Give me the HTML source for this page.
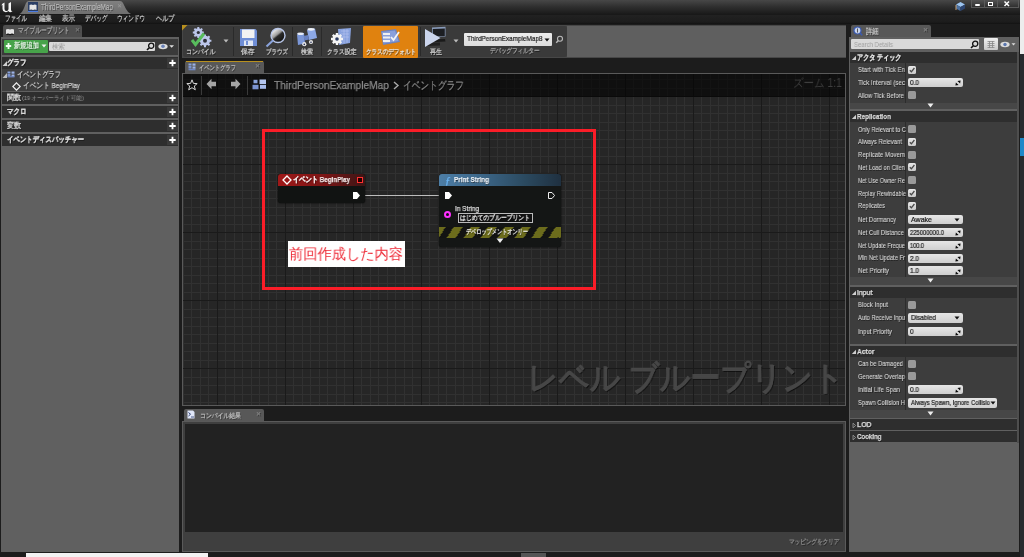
<!DOCTYPE html>
<html><head><meta charset="utf-8">
<style>
*{margin:0;padding:0;box-sizing:border-box}
html,body{width:1024px;height:557px;overflow:hidden;background:#1c1c1c;font-family:"Liberation Sans",sans-serif;color:#ccc}
.a{position:absolute}
.t,.lb,.nt{will-change:transform;-webkit-text-stroke:0.25px currentColor;text-shadow:0.6px 0.6px 0.3px rgba(0,0,0,.55)}
.t{position:absolute;white-space:nowrap;line-height:1}
.lb{position:absolute;left:858px;white-space:nowrap;line-height:1;font-size:7.5px;color:#d4d4d4;-webkit-text-stroke:0.12px #d4d4d4!important}
.cb{position:absolute;left:908px;width:8px;height:8px;border-radius:1.5px;background:#9a9a9a}
.ck{position:absolute;left:908px;width:8px;height:8px;border-radius:1.5px;background:linear-gradient(#e8e8e8,#c8c8c8)}
.nb{position:absolute;left:908px;width:55px;height:9px;border-radius:2px;background:linear-gradient(#e6e6e6,#cfcfcf)}
.nt{position:absolute;white-space:nowrap;line-height:1;font-size:7px;color:#1a1a1a;text-shadow:none!important;-webkit-text-stroke:0.2px #1a1a1a!important}
.sh{position:absolute;left:850px;width:167px;height:11px;background:#2e2e2e}
.sr{position:absolute;left:850px;width:167px;background:#3d3d3d}
.dv{position:absolute;left:905px;width:1px;background:#2c2c2c}
.ex{position:absolute;left:850px;width:167px;background:#474747}
</style></head><body>
<div class="a" style="left:0;top:0;width:1024px;height:557px;overflow:hidden">

<!-- ================= TITLE BAR ================= -->
<div class="a" style="left:0;top:0;width:1020px;height:14px;background:linear-gradient(#474747,#2e2e2e 50%,#1a1a1a)"></div>
<svg class="a" style="left:0;top:0" width="16" height="14"><path d="M1 6 Q2 3 4.5 2.5 L4.5 9 Q4.5 11 6.5 11 Q8.5 11 8.5 9 L8.5 3.5 Q9.5 2.5 11 2 L11 9.5 Q11 11.5 12.5 11 Q11.5 12.5 9.5 12 Q8.5 11.5 8.5 11 Q7 12.5 5 12 Q2.5 11.5 2.5 9 L2.5 5 Q1.5 5 1 6 Z" fill="#f4f4f4"/></svg>
<svg class="a" style="left:0;top:0" width="140" height="15"><defs><linearGradient id="tg" x1="0" y1="0" x2="0" y2="1"><stop offset="0" stop-color="#808080"/><stop offset="1" stop-color="#6e6e6e"/></linearGradient></defs><path d="M19.5 14 Q22 13 24 8 L26 3 Q27 1 29 1 L120 1 Q122 1 123 3 L126 9 Q128 13 131 14 Z" fill="url(#tg)"/></svg>
<div class="a" style="left:28px;top:2px;width:10px;height:10px;background:#2b3f66"></div>
<div class="a" style="left:28px;top:11px;width:10px;height:1px;background:#4a7ae0"></div>
<svg class="a" style="left:28px;top:2px" width="10" height="10"><path d="M1.5 3 Q3 2 5 3 Q7 2 8.5 3 L8.5 8 Q7 7 5 8 Q3 7 1.5 8 Z" fill="#e6e6e6"/></svg>
<div class="t" style="left:41px;top:3px;font-size:9px;color:#b6b6b6;--w:72;transform:scaleX(0.7090);transform-origin:0 0">ThirdPersonExampleMap</div>
<div class="t" style="left:117px;top:4px;font-size:5.5px;color:#999;text-shadow:none;-webkit-text-stroke:0">✕</div>
<!-- cap cube icon -->
<svg class="a" style="left:955px;top:1px" width="11" height="11"><path d="M5.5 1 L10 3.5 L5.5 6 L1 3.5 Z" fill="#9cc4f0"/><path d="M1 3.5 L5.5 6 L5.5 10 L1 7.5 Z" fill="#4a6fa0"/><path d="M10 3.5 L5.5 6 L5.5 10 L10 7.5 Z" fill="#2c4470"/><rect x="0.5" y="4" width="1" height="5" fill="#c8a070"/></svg>
<!-- window buttons -->
<div class="a" style="left:971px;top:0;width:48px;height:8px;background:linear-gradient(#525252,#303030);border:1px solid #5a5a5a;border-top:0"></div>
<div class="a" style="left:983.5px;top:0;width:1px;height:8px;background:#5a5a5a"></div>
<div class="a" style="left:996.5px;top:0;width:1px;height:8px;background:#5a5a5a"></div>
<div class="a" style="left:974.5px;top:4px;width:5px;height:2px;background:#fff;border-radius:1px"></div>
<div class="a" style="left:988px;top:1.5px;width:4.5px;height:4.5px;border:1.3px solid #fff"></div>
<svg class="a" style="left:1003px;top:0" width="8" height="8"><path d="M1.5 1.5 L6 6 M6 1.5 L1.5 6" stroke="#fff" stroke-width="1.5"/></svg>
<!-- right screen edge -->
<div class="a" style="left:1020px;top:0;width:4px;height:54.5px;background:#ededed"></div>
<div class="a" style="left:1020px;top:54px;width:4px;height:503px;background:#272b2e"></div>
<div class="a" style="left:1020px;top:138px;width:4px;height:18px;background:#1e88c8"></div>

<!-- ================= MENU BAR ================= -->
<div class="a" style="left:0;top:14px;width:1020px;height:10px;background:linear-gradient(#151515,#212121 15%,#1c1c1c 80%,#121212)"></div>
<div class="t" style="left:5px;top:15.2px;font-size:7.5px;color:#c6c6c6;--w:22;transform:scaleX(0.6875);transform-origin:0 0">ファイル</div>
<div class="t" style="left:38.5px;top:15.2px;font-size:7.5px;color:#c6c6c6;--w:13;transform:scaleX(0.8125);transform-origin:0 0">編集</div>
<div class="t" style="left:61.8px;top:15.2px;font-size:7.5px;color:#c6c6c6;--w:13;transform:scaleX(0.8125);transform-origin:0 0">表示</div>
<div class="t" style="left:84.5px;top:15.2px;font-size:7.5px;color:#c6c6c6;--w:22.5;transform:scaleX(0.7031);transform-origin:0 0">デバッグ</div>
<div class="t" style="left:117.2px;top:15.2px;font-size:7.5px;color:#c6c6c6;--w:28;transform:scaleX(0.7000);transform-origin:0 0">ウィンドウ</div>
<div class="t" style="left:155.8px;top:15.2px;font-size:7.5px;color:#c6c6c6;--w:18.5;transform:scaleX(0.7708);transform-origin:0 0">ヘルプ</div>

<!-- ================= LEFT PANEL ================= -->
<div class="a" style="left:0;top:24px;width:182px;height:533px;background:#1c1c1c"></div>
<div class="a" style="left:3px;top:25px;width:79px;height:12px;background:#4f4f4f;border-radius:2px 2px 0 0"></div>
<svg class="a" style="left:5px;top:27px" width="10" height="9"><path d="M1 2.5 Q3 1.5 5 2.5 Q7 1.5 9 2.5 L9 7 Q7 6 5 7 Q3 6 1 7 Z" fill="#e4e4e4"/><path d="M1.5 7.5 Q3 6.8 5 7.8 Q7 6.8 8.5 7.5" stroke="#111" stroke-width="1" fill="none"/></svg>
<div class="t" style="left:17.5px;top:27.3px;font-size:7.5px;color:#a8a8a8;--w:51.5;transform:scaleX(0.7153);transform-origin:0 0">マイブループリント</div>
<div class="t" style="left:74.5px;top:28px;font-size:5.5px;color:#777">✕</div>
<div class="a" style="left:1px;top:37px;width:178px;height:515px;background:#606060"></div>
<div class="a" style="left:2px;top:38.5px;width:176px;height:16px;background:#3a3a3a"></div>
<div class="a" style="left:4px;top:40px;width:43.5px;height:12.5px;background:#47a34a;border-radius:1px"></div>
<svg class="a" style="left:5px;top:42px" width="7" height="8"><path d="M3.5 1 V7 M0.8 4 H6.2" stroke="#f4fff4" stroke-width="1.8"/></svg>
<div class="t" style="left:13.5px;top:42.2px;font-size:7.5px;color:#e6f2e6;--w:25;transform:scaleX(0.7812);transform-origin:0 0">新規追加</div>
<svg class="a" style="left:40.5px;top:44px" width="6" height="4"><path d="M0.5 0.5 H5.5 L3 3.5 Z" fill="#f0f0f0"/></svg>
<div class="a" style="left:49px;top:41.5px;width:106px;height:9.5px;background:#d9d9d9;border-radius:1px"></div>
<div class="t" style="left:52px;top:42.5px;text-shadow:none;-webkit-text-stroke:0;font-size:7px;color:#9a9a9a;--w:12.5;transform:scaleX(0.8929);transform-origin:0 0">検索</div>
<svg class="a" style="left:146px;top:42px" width="9" height="9"><circle cx="5.2" cy="3.8" r="2.6" fill="none" stroke="#111" stroke-width="1.3"/><path d="M3.3 5.7 L1 8" stroke="#111" stroke-width="1.6"/></svg>
<svg class="a" style="left:157px;top:42px" width="20" height="9"><ellipse cx="6" cy="4.5" rx="4.6" ry="2.7" fill="#dcdcdc"/><circle cx="6" cy="4.3" r="1.8" fill="#6a82b8"/><path d="M12.3 3.3 H17 L14.65 5.8 Z" fill="#e0e0e0"/></svg>

<!-- graph section -->
<div class="a" style="left:2px;top:56.5px;width:176px;height:34px;background:#3e3e3e"></div>
<div class="a" style="left:2px;top:57px;width:176px;height:12px;background:#2e2e2e"></div>
<svg class="a" style="left:2px;top:60px" width="6" height="7"><path d="M5 1 V6 H0.5 Z" fill="#cfcfcf"/></svg>
<div class="t" style="left:7.3px;top:59.3px;font-size:7.5px;font-weight:bold;color:#dcdcdc;--w:19.5;transform:scaleX(0.8125);transform-origin:0 0">グラフ</div>
<div class="a" style="left:166.5px;top:58px;width:11px;height:10px;background:#3a3a3a"></div>
<svg class="a" style="left:166.5px;top:58px" width="11" height="10"><path d="M5.5 1.8 V8.2 M2.3 5 H8.7" stroke="#fff" stroke-width="1.8"/></svg>
<svg class="a" style="left:2px;top:71.5px" width="6" height="7"><path d="M5 1 V6 H0.5 Z" fill="#bdbdbd"/></svg>
<svg class="a" style="left:7px;top:71px" width="9" height="7"><rect x="0.5" y="3" width="3" height="2.5" fill="#7b93d0"/><rect x="4.5" y="0.5" width="3" height="2.2" fill="#9cb2e6"/><rect x="4.5" y="3.5" width="3" height="2.2" fill="#9cb2e6"/><rect x="0.5" y="0.5" width="3" height="2" fill="#8aa3dc"/><rect x="0.5" y="5.2" width="7" height="1.2" fill="#6d86c4"/></svg>
<div class="t" style="left:17.3px;top:71.3px;font-size:7.5px;color:#cfcfcf;--w:44;transform:scaleX(0.7857);transform-origin:0 0">イベントグラフ</div>
<svg class="a" style="left:12px;top:81.5px" width="9" height="9"><path d="M4.5 0.8 L8.2 4.5 L4.5 8.2 L0.8 4.5 Z" fill="none" stroke="#eee" stroke-width="1.2"/></svg>
<div class="t" style="left:22.5px;top:81.8px;font-size:7.5px;color:#cfcfcf;--w:57;transform:scaleX(0.8400);transform-origin:0 0">イベント BeginPlay</div>

<div class="a" style="left:2px;top:92.3px;width:176px;height:12.2px;background:#2e2e2e"></div>
<div class="t" style="left:7px;top:94.2px;font-size:7.5px;-webkit-text-stroke:0.3px currentColor;color:#d8d8d8;--w:14;transform:scaleX(0.8750);transform-origin:0 0">関数</div>
<div class="t" style="left:21.5px;top:95.3px;text-shadow:none;-webkit-text-stroke:0;font-size:6px;color:#9a9a9a;--w:62;transform:scaleX(0.9345);transform-origin:0 0">(19 オーバーライド可能)</div>
<div class="a" style="left:166.5px;top:93px;width:11px;height:10px;background:#3a3a3a"></div>
<svg class="a" style="left:166.5px;top:93px" width="11" height="10"><path d="M5.5 1.8 V8.2 M2.3 5 H8.7" stroke="#fff" stroke-width="1.8"/></svg>

<div class="a" style="left:2px;top:106px;width:176px;height:11.5px;background:#2e2e2e"></div>
<div class="t" style="left:7px;top:108.2px;font-size:7.5px;font-weight:bold;color:#d8d8d8;--w:19.5;transform:scaleX(0.8125);transform-origin:0 0">マクロ</div>
<div class="a" style="left:166.5px;top:107px;width:11px;height:10px;background:#3a3a3a"></div>
<svg class="a" style="left:166.5px;top:107px" width="11" height="10"><path d="M5.5 1.8 V8.2 M2.3 5 H8.7" stroke="#fff" stroke-width="1.8"/></svg>

<div class="a" style="left:2px;top:120px;width:176px;height:11.5px;background:#2e2e2e"></div>
<div class="t" style="left:7px;top:121.8px;font-size:7.5px;-webkit-text-stroke:0.3px currentColor;color:#d8d8d8;--w:14;transform:scaleX(0.8750);transform-origin:0 0">変数</div>
<div class="a" style="left:166.5px;top:121px;width:11px;height:10px;background:#3a3a3a"></div>
<svg class="a" style="left:166.5px;top:121px" width="11" height="10"><path d="M5.5 1.8 V8.2 M2.3 5 H8.7" stroke="#fff" stroke-width="1.8"/></svg>

<div class="a" style="left:2px;top:133.5px;width:176px;height:12px;background:#2e2e2e"></div>
<div class="t" style="left:7px;top:135.8px;font-size:7.5px;font-weight:bold;color:#d8d8d8;--w:77;transform:scaleX(0.8021);transform-origin:0 0">イベントディスパッチャー</div>
<div class="a" style="left:166.5px;top:135px;width:11px;height:10px;background:#3a3a3a"></div>
<svg class="a" style="left:166.5px;top:135px" width="11" height="10"><path d="M5.5 1.8 V8.2 M2.3 5 H8.7" stroke="#fff" stroke-width="1.8"/></svg>

<!-- ================= TOOLBAR ================= -->
<div class="a" style="left:182px;top:25px;width:664px;height:33px;background:#474747"></div>
<div class="a" style="left:182.5px;top:26px;width:384px;height:30.5px;background:#3a3a3a;border-radius:2px"></div>
<svg class="a" style="left:182px;top:25px" width="6" height="6"><path d="M0 0 H5.5 L0 5.5 Z" fill="#b8901e"/></svg>
<div class="a" style="left:567px;top:26px;width:279px;height:31px;background:#5f5f5f"></div>
<div class="a" style="left:233px;top:27px;width:1px;height:29px;background:#2a2a2a"></div>
<div class="a" style="left:292px;top:27px;width:1px;height:29px;background:#2a2a2a"></div>
<div class="a" style="left:321px;top:27px;width:1px;height:29px;background:#2a2a2a"></div>
<div class="a" style="left:420px;top:27px;width:1px;height:29px;background:#2a2a2a"></div>
<div class="a" style="left:363px;top:26px;width:55px;height:31.5px;background:#e0820f;border-radius:1px"></div>

<!-- compile icon -->
<svg class="a" style="left:189px;top:26px" width="26" height="23">
 <g fill="#bcc6ea"><circle cx="9.3" cy="6.5" r="4.2"/><circle cx="16" cy="14.8" r="5"/></g>
 <g stroke="#bcc6ea" stroke-width="2"><path d="M9.3 1 V12 M3.8 6.5 H14.8 M5.4 2.6 L13.2 10.4 M13.2 2.6 L5.4 10.4"/><path d="M16 8.4 V21.2 M9.6 14.8 H22.4 M11.5 10.3 L20.5 19.3 M20.5 10.3 L11.5 19.3"/></g>
 <circle cx="9.3" cy="6.5" r="1.6" fill="#2e3038"/><circle cx="16" cy="14.8" r="2" fill="#2e3038"/>
 <path d="M3 14 L6.5 18.5 L15 7.5" fill="none" stroke="#58bc5c" stroke-width="3"/>
</svg>
<svg class="a" style="left:223px;top:39px" width="6" height="4"><path d="M0.5 0.5 H5.5 L3 3.5 Z" fill="#bbb"/></svg>
<div class="t" style="left:186px;top:47.8px;font-size:7px;color:#d0d0d0;text-shadow:0.6px 0.6px 0 #151515;--w:29.5;transform:scaleX(0.8429);transform-origin:0 0">コンパイル</div>
<!-- save icon -->
<svg class="a" style="left:239px;top:28px" width="19" height="19"><path d="M1 1 H16.5 L18 2.5 V18 H1 Z" fill="#6f8ed6"/><rect x="3" y="1.5" width="12.5" height="8.5" fill="#f2f2f2"/><rect x="5" y="12.5" width="9" height="5.5" fill="#dfe6f4"/><rect x="7" y="13" width="2" height="4" fill="#6f8ed6"/></svg>
<div class="t" style="left:241px;top:47.8px;font-size:7px;color:#d0d0d0;text-shadow:0.6px 0.6px 0 #151515;--w:13.5;transform:scaleX(0.9643);transform-origin:0 0">保存</div>
<!-- browse icon -->
<svg class="a" style="left:264px;top:27px" width="24" height="21"><defs><linearGradient id="lg" x1="0.2" y1="0.1" x2="0.75" y2="0.8"><stop offset="0" stop-color="#f4f4f4"/><stop offset="0.45" stop-color="#9a9a9a"/><stop offset="0.6" stop-color="#2a2a2a"/><stop offset="1" stop-color="#181818"/></linearGradient></defs><circle cx="14" cy="8.5" r="7" fill="url(#lg)" stroke="#b8c6e8" stroke-width="1.4"/><path d="M9.2 13.3 L2.5 19.5" stroke="#8aa3dc" stroke-width="2"/></svg>
<div class="t" style="left:265.5px;top:47.8px;font-size:7px;color:#d0d0d0;text-shadow:0.6px 0.6px 0 #151515;--w:22;transform:scaleX(0.7857);transform-origin:0 0">ブラウズ</div>
<!-- find icon (binoculars) -->
<svg class="a" style="left:294px;top:26px" width="26" height="22"><path d="M3 8.5 L10 7 L11 17.5 L4 19 Z" fill="#7b97d8"/><path d="M13 4 L21 2.5 L23 12 L15 14 Z" fill="#8ca8e6"/><ellipse cx="6.5" cy="7.8" rx="3.3" ry="1.3" fill="#e6ecf8"/><ellipse cx="17" cy="3.3" rx="3.6" ry="1.4" fill="#eef2fa"/><path d="M9.5 10 L14 9 L15 13.5 L10.5 14.5 Z" fill="#6882c4"/><circle cx="10.3" cy="18.2" r="2.1" fill="#e8e8e8"/><circle cx="17" cy="16" r="2.1" fill="#e8e8e8"/><circle cx="10.3" cy="18.4" r="0.8" fill="#2a3458"/><circle cx="17" cy="16.2" r="0.8" fill="#2a3458"/></svg>
<div class="t" style="left:301px;top:47.8px;font-size:7px;color:#d0d0d0;text-shadow:0.6px 0.6px 0 #151515;--w:12;transform:scaleX(0.8571);transform-origin:0 0">検索</div>
<!-- class settings -->
<svg class="a" style="left:329px;top:27px" width="25" height="21"><path d="M9 2 L22 1 L21 16 L10 18 Z" fill="#88a2de"/><path d="M12 4 H20 M12 7 H20 M12 10 H20 M15 2 V16 M18 2 V16" stroke="#b8c8f0" stroke-width="0.6"/><circle cx="8" cy="12" r="4.5" fill="#f4f4f4"/><path d="M8 6 V18 M2 12 H14 M3.8 7.8 L12.2 16.2 M12.2 7.8 L3.8 16.2" stroke="#f4f4f4" stroke-width="2.4"/><circle cx="8" cy="12" r="1.8" fill="#2a3a60"/></svg>
<div class="t" style="left:326.8px;top:47.8px;font-size:7px;color:#d0d0d0;text-shadow:0.6px 0.6px 0 #151515;--w:29.5;transform:scaleX(0.8429);transform-origin:0 0">クラス設定</div>
<!-- class defaults -->
<svg class="a" style="left:380px;top:28px" width="22" height="19"><path d="M1 3 L16 1 L20 14 L3 17 Z" fill="#6d84c0"/><path d="M1.5 4 L15 2.5 L18.5 13 L3.5 15.5 Z" fill="#8aa0dc"/><rect x="3" y="5" width="7" height="2" fill="#f0f0f0"/><rect x="3" y="8.5" width="7" height="2" fill="#f0f0f0"/><rect x="3" y="12" width="7" height="2" fill="#f0f0f0"/><path d="M11 9 L13.5 12 L19 4" fill="none" stroke="#f4f4f4" stroke-width="1.8"/></svg>
<div class="t" style="left:365.8px;top:47.8px;font-size:7px;color:#e6e6e6;text-shadow:0.6px 0.6px 0 #3a2a10;--w:50;transform:scaleX(0.7937);transform-origin:0 0">クラスのデフォルト</div>
<!-- play icon -->
<svg class="a" style="left:420px;top:24px" width="30" height="26"><path d="M7 15.5 L25 15 L25.5 17.5 L8 18.5 Z" fill="#151515" opacity="0.85"/><path d="M6 19 L20 18.5 L20 21.5 L6 22 Z" fill="#151515" opacity="0.7"/><path d="M12 3.5 L25.5 2.8 L25.5 12.5 L12 12.8 Z" fill="#8a9cbc"/><path d="M12.8 5 L24.8 4.4 L24.8 12 L12.8 12.2 Z" fill="#1c1e22"/><path d="M5 5 L20.5 14 L5 23 Z" fill="#cbd5ec"/></svg>
<svg class="a" style="left:453px;top:39px" width="6" height="4"><path d="M0.5 0.5 H5.5 L3 3.5 Z" fill="#bbb"/></svg>
<div class="t" style="left:429.8px;top:47.8px;font-size:7px;color:#d0d0d0;text-shadow:0.6px 0.6px 0 #151515;--w:12;transform:scaleX(0.8571);transform-origin:0 0">再生</div>
<!-- debug filter -->
<div class="a" style="left:463.8px;top:32.6px;width:88.5px;height:13px;background:linear-gradient(#ececec,#dcdcdc);border-radius:1px"></div>
<div class="t" style="left:467px;top:35px;text-shadow:none;-webkit-text-stroke:0.2px #1e1e1e;font-size:7.5px;color:#1e1e1e;--w:75.5;transform:scaleX(0.8503);transform-origin:0 0">ThirdPersonExampleMap8</div>
<svg class="a" style="left:543.5px;top:38px" width="6" height="4"><path d="M0.5 0.5 H5.5 L3 3.5 Z" fill="#111"/></svg>
<svg class="a" style="left:555px;top:35px" width="9" height="9"><circle cx="5" cy="3.8" r="2.5" fill="none" stroke="#bbb" stroke-width="1.1"/><path d="M3.2 5.7 L1.2 7.8" stroke="#bbb" stroke-width="1.4"/></svg>
<div class="t" style="left:490px;top:46.5px;font-size:7px;color:#a8a8a8;--w:49.5;transform:scaleX(0.7857);transform-origin:0 0">デバッグフィルター</div>

<!-- ================= GRAPH ================= -->
<div class="a" style="left:185px;top:61px;width:79px;height:12px;background:#585858;border-radius:2px 2px 0 0"></div>
<div class="a" style="left:186px;top:61px;width:77px;height:1px;background:#b8901e"></div>
<svg class="a" style="left:188px;top:63px" width="9" height="8"><rect x="0.5" y="3" width="3" height="2.5" fill="#7b93d0"/><rect x="4.5" y="0.5" width="3" height="2.2" fill="#9cb2e6"/><rect x="4.5" y="3.5" width="3" height="2.2" fill="#9cb2e6"/><rect x="0.5" y="0.5" width="3" height="2" fill="#8aa3dc"/><rect x="0.5" y="5.8" width="7" height="1.5" fill="#6d86c4"/></svg>
<div class="t" style="left:199px;top:63.5px;font-size:7px;color:#bdbdbd;--w:37;transform:scaleX(0.7551);transform-origin:0 0">イベントグラフ</div>
<div class="t" style="left:255px;top:64px;font-size:5.5px;color:#808080">✕</div>

<div class="a" style="left:182px;top:73px;width:664px;height:333px;background:#5a5a5a"></div>
<div class="a" style="left:183px;top:74px;width:662px;height:331px;background:#262626"></div>
<svg class="a" style="left:183px;top:74px" width="662" height="331"><path shape-rendering="crispEdges" d="M0.5 0V331M8.5 0V331M17.5 0V331M25.5 0V331M42.5 0V331M51.5 0V331M59.5 0V331M68.5 0V331M76.5 0V331M85.5 0V331M93.5 0V331M110.5 0V331M119.5 0V331M127.5 0V331M136.5 0V331M144.5 0V331M153.5 0V331M161.5 0V331M178.5 0V331M187.5 0V331M195.5 0V331M204.5 0V331M212.5 0V331M221.5 0V331M229.5 0V331M246.5 0V331M255.5 0V331M263.5 0V331M272.5 0V331M280.5 0V331M289.5 0V331M297.5 0V331M314.5 0V331M323.5 0V331M331.5 0V331M340.5 0V331M348.5 0V331M357.5 0V331M365.5 0V331M382.5 0V331M391.5 0V331M399.5 0V331M408.5 0V331M416.5 0V331M425.5 0V331M433.5 0V331M450.5 0V331M459.5 0V331M467.5 0V331M476.5 0V331M484.5 0V331M493.5 0V331M501.5 0V331M518.5 0V331M527.5 0V331M535.5 0V331M544.5 0V331M552.5 0V331M561.5 0V331M569.5 0V331M586.5 0V331M595.5 0V331M603.5 0V331M612.5 0V331M620.5 0V331M629.5 0V331M637.5 0V331M654.5 0V331M0 5.5H662M0 14.5H662M0 31.5H662M0 39.5H662M0 48.5H662M0 56.5H662M0 65.5H662M0 73.5H662M0 82.5H662M0 99.5H662M0 107.5H662M0 116.5H662M0 124.5H662M0 133.5H662M0 141.5H662M0 150.5H662M0 167.5H662M0 175.5H662M0 184.5H662M0 192.5H662M0 201.5H662M0 209.5H662M0 218.5H662M0 235.5H662M0 243.5H662M0 252.5H662M0 260.5H662M0 269.5H662M0 277.5H662M0 286.5H662M0 303.5H662M0 311.5H662M0 320.5H662M0 328.5H662" stroke="#313131" stroke-width="1" fill="none"/><path shape-rendering="crispEdges" d="M34.5 0V331M102.5 0V331M170.5 0V331M238.5 0V331M306.5 0V331M374.5 0V331M442.5 0V331M510.5 0V331M578.5 0V331M646.5 0V331M0 22.5H662M0 90.5H662M0 158.5H662M0 226.5H662M0 294.5H662" stroke="#1a1a1a" stroke-width="1" fill="none"/></svg>
<div class="a" style="left:183px;top:74px;width:662px;height:23px;background:rgba(0,0,0,0.6)"></div>
<svg class="a" style="left:186px;top:79px" width="12" height="12"><path d="M6 0.8 L7.4 4.4 L11.2 4.6 L8.3 7 L9.3 10.8 L6 8.7 L2.7 10.8 L3.7 7 L0.8 4.6 L4.6 4.4 Z" fill="none" stroke="#d6d6d6" stroke-width="1"/></svg>
<div class="a" style="left:201px;top:76px;width:1px;height:19px;background:#3a3a3a"></div>
<svg class="a" style="left:206px;top:78px" width="11" height="12"><path d="M0.5 6 L5.5 0.8 V3.8 H10 V8.2 H5.5 V11.2 Z" fill="#a4a4a4"/></svg>
<svg class="a" style="left:229.5px;top:78px" width="11" height="12"><path d="M10.5 6 L5.5 0.8 V3.8 H1 V8.2 H5.5 V11.2 Z" fill="#a4a4a4"/></svg>
<div class="a" style="left:247px;top:76px;width:1px;height:19px;background:#3a3a3a"></div>
<svg class="a" style="left:252px;top:79px" width="15" height="11"><rect x="1.5" y="0.8" width="4" height="3.5" fill="#8aa3dc"/><rect x="7.5" y="0.5" width="6.5" height="4.5" fill="#b4c6f0"/><rect x="0.5" y="5.8" width="6" height="4.5" fill="#7b93d0"/><rect x="8" y="5.8" width="6" height="4" fill="#a8bcec"/></svg>
<div class="t" style="left:273.5px;top:79.5px;font-size:11px;color:#8c8c8c;--w:115;transform:scaleX(0.9265);transform-origin:0 0">ThirdPersonExampleMap</div>
<svg class="a" style="left:392px;top:81px" width="8" height="9"><path d="M2 1 L6 4.5 L2 8" fill="none" stroke="#a8a8a8" stroke-width="1.4"/></svg>
<div class="t" style="left:402.5px;top:79.5px;font-size:11px;color:#8c8c8c;--w:61;transform:scaleX(0.7922);transform-origin:0 0">イベントグラフ</div>
<div class="t" style="left:792.5px;top:77px;text-shadow:none;-webkit-text-stroke:0;font-size:12px;color:#3e3e3e;--w:49;transform:scaleX(0.8748);transform-origin:0 0">ズーム 1:1</div>
<div class="t" style="left:528px;top:360.5px;font-size:33px;font-weight:bold;color:#474747;--w:316;transform:scaleX(0.9076);transform-origin:0 0">レベル ブループリント</div>

<!-- red annotation -->
<div class="a" style="left:262px;top:128.5px;width:333.6px;height:161.3px;border:3px solid #fb1d28"></div>
<div class="a" style="left:288px;top:241px;width:117px;height:26px;background:#fff"></div>
<div class="t" style="left:289px;top:246px;text-shadow:none;-webkit-text-stroke:0;font-size:15px;color:#ee2a36;--w:114;transform:scaleX(0.9500);transform-origin:0 0">前回作成した内容</div>
<!-- wire -->
<div class="a" style="left:362px;top:195px;width:78px;height:1px;background:#bdbdbd"></div>
<!-- event node -->
<div class="a" style="left:278px;top:174px;width:87px;height:29px;border-radius:3px;background:#111312;box-shadow:0 0 2px #000"></div>
<div class="a" style="left:278px;top:174px;width:87px;height:12px;border-radius:3px 3px 0 0;background:linear-gradient(90deg,#a01818,#7a1515 55%,#3a1616)"></div>
<svg class="a" style="left:282px;top:175px" width="10" height="10"><path d="M5 1 L9 5 L5 9 L1 5 Z" fill="none" stroke="#fff" stroke-width="1.3"/></svg>
<div class="t" style="left:293px;top:176px;font-size:8px;font-weight:bold;color:#f2e6e6;--w:57;transform:scaleX(0.7818);transform-origin:0 0">イベント BeginPlay</div>
<div class="a" style="left:357px;top:177px;width:6px;height:6px;border:1.3px solid #ff3030;background:#200"></div>
<svg class="a" style="left:352px;top:191px" width="9" height="9"><path d="M1 1 H5 L8 4.5 L5 8 H1 Z" fill="#fff"/></svg>
<!-- print string node -->
<div class="a" style="left:439px;top:174px;width:122px;height:73px;border-radius:3px;background:#141615;box-shadow:0 0 2px #000"></div>
<div class="a" style="left:439px;top:174px;width:122px;height:12px;border-radius:3px 3px 0 0;background:linear-gradient(90deg,#4d7ea6,#3c6688 35%,#2b4a60 70%,#1f3040)"></div>
<div class="t" style="left:444.5px;top:174.5px;font-size:11px;font-style:italic;font-family:'Liberation Serif',serif;color:#6ab4f4;text-shadow:none">ƒ</div>
<div class="t" style="left:454px;top:176px;font-size:8px;font-weight:bold;color:#e8eef4;--w:35;transform:scaleX(0.8034);transform-origin:0 0">Print String</div>
<svg class="a" style="left:444px;top:191px" width="9" height="9"><path d="M1 1 H5 L8 4.5 L5 8 H1 Z" fill="#fff"/></svg>
<svg class="a" style="left:547px;top:191px" width="9" height="9"><path d="M1.5 1.5 H5 L7.5 4.5 L5 7.5 H1.5 Z" fill="none" stroke="#eee" stroke-width="1"/></svg>
<div class="t" style="left:455px;top:205px;font-size:7px;color:#ddd;--w:24;transform:scaleX(0.9203);transform-origin:0 0">In String</div>
<div class="a" style="left:444px;top:211px;width:7px;height:7px;border-radius:50%;border:2px solid #ff30ff;background:#140814"></div>
<div class="a" style="left:458px;top:213px;width:75px;height:10px;border:1px solid #bbb;background:#111"></div>
<div class="t" style="left:460px;top:214px;font-size:7px;color:#eee;--w:70;transform:scaleX(0.8333);transform-origin:0 0">はじめてのブループリント</div>
<div class="a" style="left:439px;top:227px;width:122px;height:11px;background:repeating-linear-gradient(122deg,#6c6c1c 0 7.6px,#121312 7.6px 14.4px);background-position:-2.4px 0"></div>
<div class="t" style="left:466px;top:228px;font-size:7px;color:#eee;--w:62;transform:scaleX(0.7381);transform-origin:0 0">デベロップメントオンリー</div>
<svg class="a" style="left:496px;top:238px" width="8" height="6"><path d="M0.5 0.5 H7.5 L4 5 Z" fill="#eee"/></svg>

<!-- ================= COMPILE RESULTS ================= -->
<div class="a" style="left:184px;top:409px;width:80px;height:12px;background:#585858;border-radius:2px 2px 0 0"></div>
<svg class="a" style="left:187px;top:410px" width="8" height="9"><path d="M0.5 0.5 H6 L7.5 2 V8.5 H0.5 Z" fill="#dfe6f8"/><path d="M1.5 2.5 L3.5 4.2 L1.5 6" fill="none" stroke="#2a3a70" stroke-width="1"/><path d="M4 7 H7" stroke="#2a3a70" stroke-width="0.8"/></svg>
<div class="t" style="left:199.5px;top:411.5px;font-size:7px;color:#bdbdbd;--w:41;transform:scaleX(0.8367);transform-origin:0 0">コンパイル結果</div>
<div class="t" style="left:255.5px;top:412px;font-size:5.5px;color:#808080">✕</div>
<div class="a" style="left:182px;top:421px;width:664px;height:131px;background:#3f3f3f;border:1px solid #5a5a5a"></div>
<div class="a" style="left:185px;top:424px;width:658px;height:108px;background:#222"></div>
<div class="t" style="left:789px;top:537.5px;font-size:7px;color:#8a8a8a;--w:50.5;transform:scaleX(0.8016);transform-origin:0 0">マッピングをクリア</div>

<!-- ================= DETAILS ================= -->
<div class="a" style="left:851px;top:25px;width:80px;height:12px;background:#585858;border-radius:2px 2px 0 0"></div>
<svg class="a" style="left:853px;top:26px" width="10" height="10"><circle cx="4.5" cy="4.5" r="3.5" fill="#c8d4ec" stroke="#3a5ab0" stroke-width="1.2"/><path d="M6.8 6.8 L9.2 9.2" stroke="#3a5ab0" stroke-width="1.6"/><rect x="4" y="2.5" width="1" height="4" fill="#555"/></svg>
<div class="t" style="left:866px;top:27.5px;font-size:7.5px;color:#c0c0c0;--w:12.5;transform:scaleX(0.7812);transform-origin:0 0">詳細</div>
<div class="t" style="left:922.5px;top:28px;font-size:5.5px;color:#808080">✕</div>
<div class="a" style="left:849px;top:37px;width:170px;height:515px;background:#606060"></div>
<div class="a" style="left:1017px;top:52px;width:2px;height:391px;background:#4e4e4e"></div>
<div class="a" style="left:851px;top:39.4px;width:128px;height:9.6px;background:#d9d9d9;border-radius:1px"></div>
<div class="t" style="left:853.5px;top:40.8px;text-shadow:none;-webkit-text-stroke:0;font-size:7px;color:#9f9f9f;--w:39;transform:scaleX(0.8566);transform-origin:0 0">Search Details</div>
<svg class="a" style="left:970px;top:40px" width="9" height="9"><circle cx="5.2" cy="3.8" r="2.6" fill="none" stroke="#111" stroke-width="1.3"/><path d="M3.3 5.7 L1 8" stroke="#111" stroke-width="1.6"/></svg>
<div class="a" style="left:984px;top:38.3px;width:14px;height:12px;background:linear-gradient(#f0f0f0,#c8c8c8);border-radius:1px"></div>
<svg class="a" style="left:986px;top:40px" width="10" height="9"><path d="M1.5 1.5 H8.5 M1.5 3.5 H8.5 M1.5 5.5 H8.5 M1.5 7.5 H8.5 M3.5 1 V8 M6.5 1 V8" stroke="#888" stroke-width="0.8"/></svg>
<svg class="a" style="left:1000px;top:40px" width="18" height="9"><ellipse cx="5" cy="4.5" rx="4.6" ry="2.8" fill="#dcdcdc"/><circle cx="5" cy="4.5" r="1.7" fill="#5a76b0"/><path d="M11.5 3.3 H15.5 L13.5 5.5 Z" fill="#dcdcdc"/></svg>

<!-- アクタティック -->
<div class="sh" style="top:52px"></div>
<svg class="a" style="left:851px;top:55px" width="6" height="6"><path d="M5 0.8 V5 H0.8 Z" fill="#cfcfcf"/></svg>
<div class="t" style="left:857.3px;top:54px;font-size:7.5px;font-weight:bold;color:#dcdcdc;--w:44.5;transform:scaleX(0.7660);transform-origin:0 0">アクタ ティック</div>
<div class="sr" style="top:63px;height:39.5px"></div>
<div class="dv" style="top:63px;height:39.5px"></div>
<div class="lb" style="top:65.8px;--w:47;transform:scaleX(0.8112);transform-origin:0 0">Start with Tick En</div>
<div class="ck" style="top:65.8px"><svg width="8" height="8" style="position:absolute;left:0;top:0"><path d="M1.8 4.2 L3.4 5.8 L6.4 2" fill="none" stroke="#4a4a4a" stroke-width="1.3"/></svg></div>
<div class="lb" style="top:78.7px;--w:47;transform:scaleX(0.8332);transform-origin:0 0">Tick Interval (sec</div>
<div class="nb" style="top:78px"></div><svg class="a" style="left:955.3px;top:80.2px" width="6" height="6"><path d="M5.6 0.4 L2.4 0.9 L5.1 3.6 Z M0.4 5.6 L0.9 2.4 L3.6 5.1 Z" fill="#0a0a0a"/></svg>
<div class="nt" style="left:909.5px;top:79px;--w:9;transform:scaleX(0.9246);transform-origin:0 0">0.0</div>
<div class="lb" style="top:91.6px;--w:46;transform:scaleX(0.7996);transform-origin:0 0">Allow Tick Before</div>
<div class="cb" style="top:91.3px"></div>
<div class="ex" style="top:102.5px;height:6.5px"></div>
<svg class="a" style="left:927px;top:103px" width="7" height="5"><path d="M0.5 0.5 H6.5 L3.5 4.5 Z" fill="#eee"/></svg>

<!-- Replication -->
<div class="sh" style="top:111px"></div>
<svg class="a" style="left:851px;top:114px" width="6" height="6"><path d="M5 0.8 V5 H0.8 Z" fill="#cfcfcf"/></svg>
<div class="t" style="left:857.3px;top:112.8px;font-size:8px;font-weight:bold;color:#dcdcdc;--w:34;transform:scaleX(0.7884);transform-origin:0 0">Replication</div>
<div class="sr" style="top:122px;height:154.5px"></div>
<div class="dv" style="top:122px;height:154.5px"></div>
<div class="lb" style="top:125.6px;--w:48;transform:scaleX(0.7625);transform-origin:0 0">Only Relevant to C</div>
<div class="cb" style="top:125.1px"></div>
<div class="lb" style="top:138.2px;--w:44;transform:scaleX(0.7935);transform-origin:0 0">Always Relevant</div>
<div class="ck" style="top:137.7px"><svg width="8" height="8" style="position:absolute;left:0;top:0"><path d="M1.8 4.2 L3.4 5.8 L6.4 2" fill="none" stroke="#4a4a4a" stroke-width="1.3"/></svg></div>
<div class="lb" style="top:151.3px;--w:47;transform:scaleX(0.8110);transform-origin:0 0">Replicate Movem</div>
<div class="cb" style="top:150.8px"></div>
<div class="lb" style="top:163.9px;--w:47;transform:scaleX(0.7827);transform-origin:0 0">Net Load on Clien</div>
<div class="ck" style="top:163.4px"><svg width="8" height="8" style="position:absolute;left:0;top:0"><path d="M1.8 4.2 L3.4 5.8 L6.4 2" fill="none" stroke="#4a4a4a" stroke-width="1.3"/></svg></div>
<div class="lb" style="top:176.8px;--w:47;transform:scaleX(0.7468);transform-origin:0 0">Net Use Owner Re</div>
<div class="cb" style="top:176.3px"></div>
<div class="lb" style="top:189.6px;--w:48;transform:scaleX(0.7427);transform-origin:0 0">Replay Rewindable</div>
<div class="ck" style="top:189.1px"><svg width="8" height="8" style="position:absolute;left:0;top:0"><path d="M1.8 4.2 L3.4 5.8 L6.4 2" fill="none" stroke="#4a4a4a" stroke-width="1.3"/></svg></div>
<div class="lb" style="top:202.2px;--w:27;transform:scaleX(0.7707);transform-origin:0 0">Replicates</div>
<div class="ck" style="top:201.7px"><svg width="8" height="8" style="position:absolute;left:0;top:0"><path d="M1.8 4.2 L3.4 5.8 L6.4 2" fill="none" stroke="#4a4a4a" stroke-width="1.3"/></svg></div>
<div class="lb" style="top:215.6px;--w:38;transform:scaleX(0.7927);transform-origin:0 0">Net Dormancy</div>
<div class="nb" style="top:214.5px;height:9.5px"></div>
<div class="nt" style="left:911px;top:215.8px;--w:21;transform:scaleX(1.0052);transform-origin:0 0">Awake</div>
<svg class="a" style="left:954px;top:217.5px" width="6" height="4"><path d="M0.5 0.5 H5.5 L3 3.5 Z" fill="#111"/></svg>
<div class="lb" style="top:228.9px;--w:46;transform:scaleX(0.7937);transform-origin:0 0">Net Cull Distance</div>
<div class="nb" style="top:228.2px"></div><svg class="a" style="left:955.3px;top:230.4px" width="6" height="6"><path d="M5.6 0.4 L2.4 0.9 L5.1 3.6 Z M0.4 5.6 L0.9 2.4 L3.6 5.1 Z" fill="#0a0a0a"/></svg>
<div class="nt" style="left:909.5px;top:229.2px;--w:34;transform:scaleX(0.8315);transform-origin:0 0">225000000.0</div>
<div class="lb" style="top:241.7px;--w:47;transform:scaleX(0.7367);transform-origin:0 0">Net Update Freque</div>
<div class="nb" style="top:241px"></div><svg class="a" style="left:955.3px;top:243.2px" width="6" height="6"><path d="M5.6 0.4 L2.4 0.9 L5.1 3.6 Z M0.4 5.6 L0.9 2.4 L3.6 5.1 Z" fill="#0a0a0a"/></svg>
<div class="nt" style="left:909.5px;top:242px;--w:14;transform:scaleX(0.7986);transform-origin:0 0">100.0</div>
<div class="lb" style="top:254.3px;--w:47;transform:scaleX(0.7670);transform-origin:0 0">Min Net Update Fr</div>
<div class="nb" style="top:253.6px"></div><svg class="a" style="left:955.3px;top:255.8px" width="6" height="6"><path d="M5.6 0.4 L2.4 0.9 L5.1 3.6 Z M0.4 5.6 L0.9 2.4 L3.6 5.1 Z" fill="#0a0a0a"/></svg>
<div class="nt" style="left:909.5px;top:254.6px;--w:9;transform:scaleX(0.9246);transform-origin:0 0">2.0</div>
<div class="lb" style="top:267.1px;--w:31;transform:scaleX(0.8357);transform-origin:0 0">Net Priority</div>
<div class="nb" style="top:266.4px"></div><svg class="a" style="left:955.3px;top:268.6px" width="6" height="6"><path d="M5.6 0.4 L2.4 0.9 L5.1 3.6 Z M0.4 5.6 L0.9 2.4 L3.6 5.1 Z" fill="#0a0a0a"/></svg>
<div class="nt" style="left:909.5px;top:267.4px;--w:9;transform:scaleX(0.9246);transform-origin:0 0">1.0</div>
<div class="ex" style="top:276.5px;height:8px"></div>
<svg class="a" style="left:927px;top:277.5px" width="7" height="5"><path d="M0.5 0.5 H6.5 L3.5 4.5 Z" fill="#eee"/></svg>

<!-- Input -->
<div class="sh" style="top:287px"></div>
<svg class="a" style="left:851px;top:290px" width="6" height="6"><path d="M5 0.8 V5 H0.8 Z" fill="#cfcfcf"/></svg>
<div class="t" style="left:857.3px;top:288.8px;font-size:8px;font-weight:bold;color:#dcdcdc;--w:15.5;transform:scaleX(0.7930);transform-origin:0 0">Input</div>
<div class="sr" style="top:298px;height:46px"></div>
<div class="dv" style="top:298px;height:46px"></div>
<div class="lb" style="top:301.4px;--w:30;transform:scaleX(0.8084);transform-origin:0 0">Block Input</div>
<div class="cb" style="top:300.9px"></div>
<div class="lb" style="top:314.3px;--w:47;transform:scaleX(0.7668);transform-origin:0 0">Auto Receive Inpu</div>
<div class="nb" style="top:312.9px;height:9.9px"></div>
<div class="nt" style="left:911px;top:314.3px;--w:25;transform:scaleX(0.9174);transform-origin:0 0">Disabled</div>
<svg class="a" style="left:954px;top:316px" width="6" height="4"><path d="M0.5 0.5 H5.5 L3 3.5 Z" fill="#111"/></svg>
<div class="lb" style="top:328.0px;--w:34;transform:scaleX(0.8074);transform-origin:0 0">Input Priority</div>
<div class="nb" style="top:327.3px"></div><svg class="a" style="left:955.3px;top:329.5px" width="6" height="6"><path d="M5.6 0.4 L2.4 0.9 L5.1 3.6 Z M0.4 5.6 L0.9 2.4 L3.6 5.1 Z" fill="#0a0a0a"/></svg>
<div class="nt" style="left:910px;top:328.3px;--w:3.5;transform:scaleX(0.8960);transform-origin:0 0">0</div>

<!-- Actor -->
<div class="sh" style="top:346px;height:10.5px"></div>
<svg class="a" style="left:851px;top:348.5px" width="6" height="6"><path d="M5 0.8 V5 H0.8 Z" fill="#cfcfcf"/></svg>
<div class="t" style="left:857.3px;top:347.5px;font-size:8px;font-weight:bold;color:#dcdcdc;--w:17.5;transform:scaleX(0.8377);transform-origin:0 0">Actor</div>
<div class="sr" style="top:356.5px;height:53px"></div>
<div class="dv" style="top:356.5px;height:53px"></div>
<div class="lb" style="top:360.1px;--w:45;transform:scaleX(0.7653);transform-origin:0 0">Can be Damaged</div>
<div class="cb" style="top:359.6px"></div>
<div class="lb" style="top:372.7px;--w:47;transform:scaleX(0.7883);transform-origin:0 0">Generate Overlap</div>
<div class="cb" style="top:372.2px"></div>
<div class="lb" style="top:385.9px;--w:42;transform:scaleX(0.8188);transform-origin:0 0">Initial Life Span</div>
<div class="nb" style="top:385.2px"></div><svg class="a" style="left:955.3px;top:387.4px" width="6" height="6"><path d="M5.6 0.4 L2.4 0.9 L5.1 3.6 Z M0.4 5.6 L0.9 2.4 L3.6 5.1 Z" fill="#0a0a0a"/></svg>
<div class="nt" style="left:909.5px;top:386.2px;--w:9;transform:scaleX(0.9246);transform-origin:0 0">0.0</div>
<div class="lb" style="top:399.1px;--w:47;transform:scaleX(0.7721);transform-origin:0 0">Spawn Collision H</div>
<div class="nb" style="top:397.8px;width:89px;height:10px"></div>
<div class="nt" style="left:911px;top:399.3px;--w:79;transform:scaleX(0.8425);transform-origin:0 0">Always Spawn, Ignore Collisio</div>
<svg class="a" style="left:990px;top:401px" width="6" height="4"><path d="M0.5 0.5 H5.5 L3 3.5 Z" fill="#111"/></svg>
<div class="ex" style="top:409.5px;height:8.5px"></div>
<svg class="a" style="left:927px;top:410.5px" width="7" height="5"><path d="M0.5 0.5 H6.5 L3.5 4.5 Z" fill="#eee"/></svg>

<!-- LOD / Cooking -->
<div class="sh" style="top:419px;height:10.8px"></div>
<svg class="a" style="left:851.5px;top:421.5px" width="5" height="7"><path d="M1 1.2 L3.6 3.5 L1 5.8 Z" fill="none" stroke="#aaa" stroke-width="0.7"/></svg>
<div class="t" style="left:857.3px;top:420.5px;font-size:8px;font-weight:bold;color:#dcdcdc;--w:14.5;transform:scaleX(0.8585);transform-origin:0 0">LOD</div>
<div class="sh" style="top:431.4px;height:11.1px"></div>
<svg class="a" style="left:851.5px;top:434px" width="5" height="7"><path d="M1 1.2 L3.6 3.5 L1 5.8 Z" fill="none" stroke="#aaa" stroke-width="0.7"/></svg>
<div class="t" style="left:857.3px;top:433.2px;font-size:8px;font-weight:bold;color:#dcdcdc;--w:24.5;transform:scaleX(0.7656);transform-origin:0 0">Cooking</div>

<!-- bottom -->
<div class="a" style="left:26px;top:553px;width:182px;height:4px;background:#f2f2f2"></div>
<div class="a" style="left:521px;top:553px;width:25px;height:4px;background:#555"></div>
</div>
</body></html>
